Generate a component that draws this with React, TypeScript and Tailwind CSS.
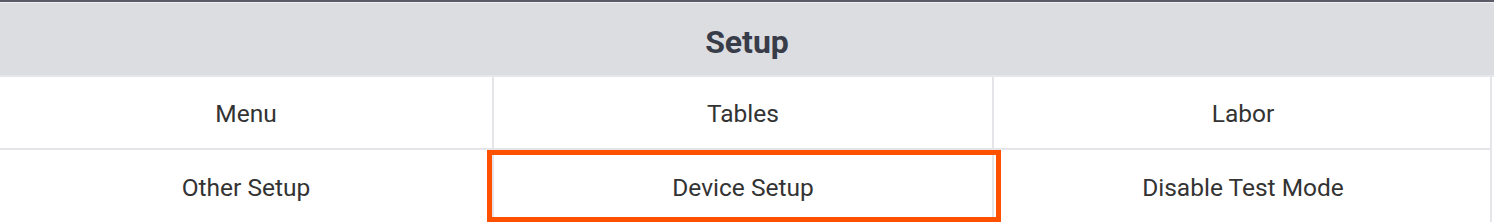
import React from 'react';

const rows = [
  ['Menu', 'Tables', 'Labor'],
  ['Other Setup', 'Device Setup', 'Disable Test Mode'],
];

export default function App() {
  return (
    <div className="relative w-[1494px] h-[222px] overflow-hidden bg-white font-['Roboto','Liberation_Sans',sans-serif]">
      {/* header */}
      <div className="h-[2px] bg-[#5a5b67]" />
      <div className="h-px bg-[#f0f0f3]" />
      <div className="h-[74px] pt-[5px] bg-[#dcdde1] border-b-2 border-[#e6e7eb] flex items-center justify-center">
        <h1 className="text-[32px] font-bold text-[#383c48] leading-none">Setup</h1>
      </div>

      {/* grid of options */}
      <div className="grid grid-cols-[494px_500px_498px] w-[1492px] border-r-2 border-[#e4e4e9]">
        {rows.map((row, r) =>
          row.map((label, c) => (
            <div
              key={label}
              className={
                'flex items-center justify-center pt-[4px] text-[24.5px] text-[#333333] ' +
                (r === 0 ? 'h-[73px] border-b-2 border-[#e4e4e9] ' : 'h-[72px] ') +
                (c < 2 ? 'border-r-2 border-r-[#e4e4e9]' : '')
              }
            >
              {label}
            </div>
          ))
        )}
      </div>

      {/* selection highlight */}
      <div className="absolute left-[487px] top-[150px] w-[514px] h-[72px] border-[5px] border-[#ff5000] pointer-events-none" />
    </div>
  );
}
